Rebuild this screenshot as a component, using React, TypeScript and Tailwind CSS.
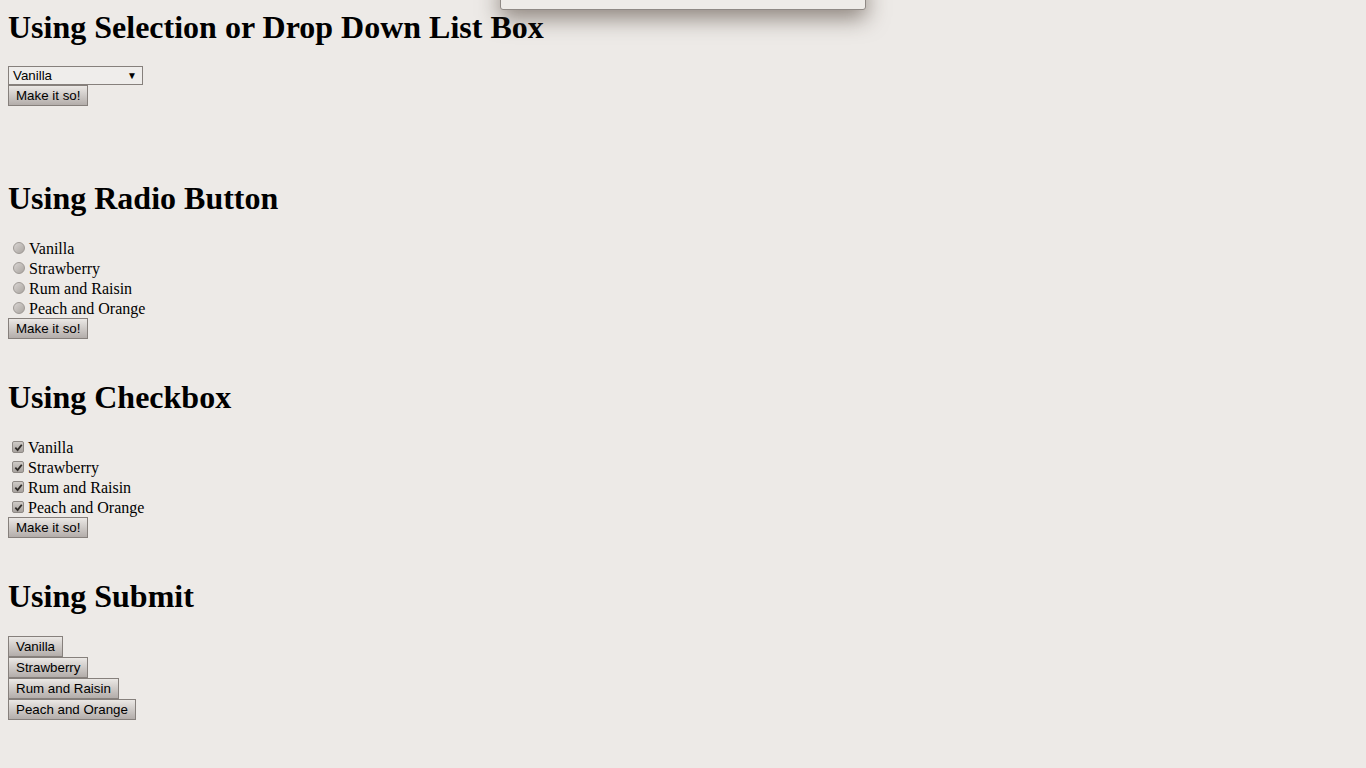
const FLAVOURS = ['Vanilla', 'Strawberry', 'Rum and Raisin', 'Peach and Orange'];

function Heading({ children, className = '' }: { children: string; className?: string }) {
  return (
    <h1
      className={`text-[32px] leading-[37px] h-[37px] font-bold text-black whitespace-nowrap ${className}`}
      style={{ fontFamily: '"Liberation Serif", "Times New Roman", serif' }}
    >
      {children}
    </h1>
  );
}

function GrayButton({ children, className = '' }: { children: string; className?: string }) {
  return (
    <button
      type="button"
      className={`block h-[21px] px-[7px] border border-[#86807c] bg-gradient-to-b from-[#ebe8e5] to-[#b3adaa] text-[13.33px] leading-[19px] text-black whitespace-nowrap ${className}`}
      style={{ fontFamily: '"Liberation Sans", Arial, sans-serif' }}
    >
      {children}
    </button>
  );
}

function Radio({ label }: { label: string }) {
  return (
    <label className="flex items-center h-[20px] text-[16px] text-black">
      <span className="ml-[5px] mr-[4px] w-[12px] h-[12px] rounded-full border border-[#9e9995] bg-gradient-to-br from-[#d9d5d2] to-[#aaa5a1] -mt-[2px]" />
      {label}
    </label>
  );
}

function Check({ label }: { label: string }) {
  return (
    <label className="flex items-center h-[20px] text-[16px] text-black">
      <span className="ml-[4px] mr-[4px] w-[12px] h-[12px] rounded-[2px] border border-[#8f8a86] bg-gradient-to-b from-[#cfcbc7] to-[#a9a4a0] flex items-center justify-center -mt-[2px]">
        <svg viewBox="0 0 10 10" className="w-[9px] h-[9px]">
          <path d="M1.5 5.2 L4 7.8 L8.6 2" fill="none" stroke="#2f2b28" strokeWidth="2" />
        </svg>
      </span>
      {label}
    </label>
  );
}

export default function App() {
  return (
    <div
      className="relative min-h-[768px] bg-[#edeae7] px-[8px] overflow-hidden"
      style={{ fontFamily: '"Liberation Serif", "Times New Roman", serif' }}
    >
      {/* dialog sliver at the top */}
      <div className="absolute left-[500px] top-[-20px] w-[366px] h-[30px] bg-[#eeebe8] border border-[#8f8985] rounded-b-[3px] shadow-[0_8px_22px_rgba(60,45,35,0.55)]" />

      <Heading className="pt-[9px] h-auto">Using Selection or Drop Down List Box</Heading>
      <div
        className="mt-[20px] relative w-[135px] h-[19px] border border-[#86807c] bg-[#efedeb] text-[13.33px] leading-[17px] pl-[4px] text-black"
        style={{ fontFamily: '"Liberation Sans", Arial, sans-serif' }}
      >
        Vanilla
        <span className="absolute right-[5px] top-0 text-[10px] leading-[17px]">▼</span>
      </div>
      <GrayButton>Make it so!</GrayButton>

      <Heading className="mt-[74px]">Using Radio Button</Heading>
      <div className="mt-[22px]">
        {FLAVOURS.map((f) => (
          <Radio key={f} label={f} />
        ))}
      </div>
      <GrayButton className="-mt-[1px]">Make it so!</GrayButton>

      <Heading className="mt-[40px]">Using Checkbox</Heading>
      <div className="mt-[22px]">
        {FLAVOURS.map((f) => (
          <Check key={f} label={f} />
        ))}
      </div>
      <GrayButton className="-mt-[1px]">Make it so!</GrayButton>

      <Heading className="mt-[40px]">Using Submit</Heading>
      <div className="mt-[21px]">
        {FLAVOURS.map((f) => (
          <GrayButton key={f}>{f}</GrayButton>
        ))}
      </div>
    </div>
  );
}
